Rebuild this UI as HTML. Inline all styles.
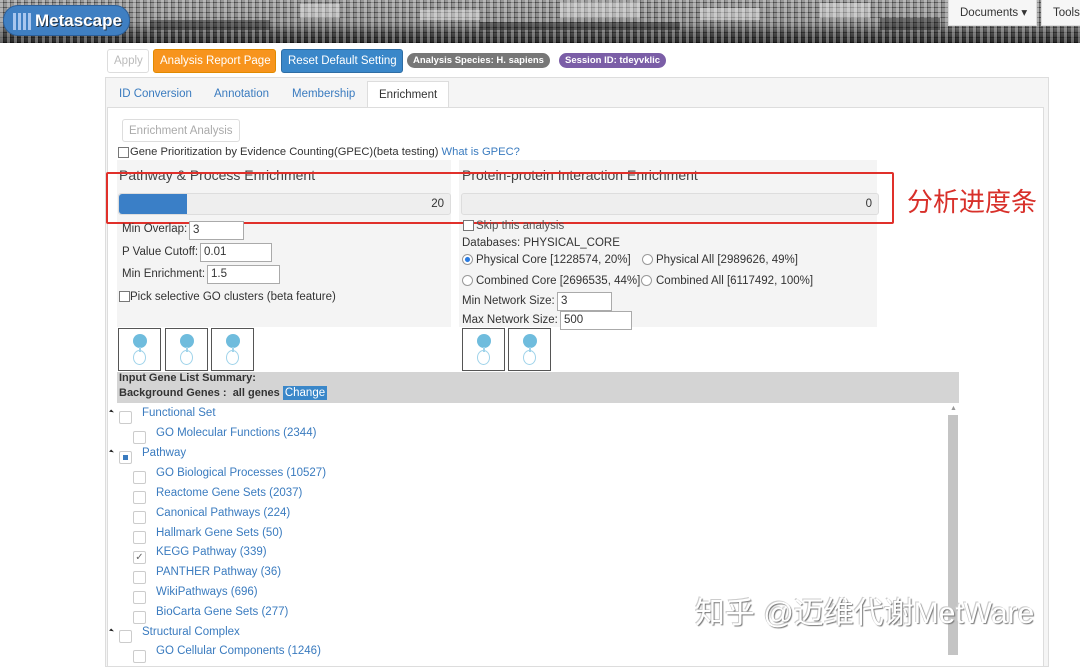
<!DOCTYPE html>
<html><head><meta charset="utf-8"><style>
*{box-sizing:border-box;margin:0;padding:0}
body{width:1080px;height:655px;overflow:hidden;background:#fff;font-family:"Liberation Sans",Arial,sans-serif;font-size:11.5px;color:#333;position:relative}
.hdr{position:absolute;left:0;top:0;width:1080px;height:43px;background:
repeating-linear-gradient(90deg,rgba(255,255,255,.3) 0 3px,rgba(0,0,0,.25) 3px 4px,transparent 4px 7px),
repeating-linear-gradient(0deg,rgba(0,0,0,.4) 0 1px,transparent 1px 5px),
linear-gradient(180deg,#999 0,#888 50%,#444 80%,#222 100%);}
.hdr .blk{position:absolute;background:rgba(255,255,255,.35)}
.hdr .dk{position:absolute;background:rgba(0,0,0,.35)}
.logo{position:absolute;left:3px;top:5px;width:127px;height:31px;background:#3f7fc2;border-radius:15px;border:1px solid #2c5f99;color:#fff;font-weight:bold;font-size:17px;line-height:29px;padding-left:31px;text-shadow:1px 1px 0 #234}
.logo i{position:absolute;left:9px;top:7px;width:18px;height:17px;background:linear-gradient(90deg,#a8c6ee 0 3px,transparent 3px 5px,#a8c6ee 5px 8px,transparent 8px 10px,#a8c6ee 10px 13px,transparent 13px 15px,#a8c6ee 15px)}
.nav{position:absolute;top:0;height:26px;background:#f6f6f6;border:1px solid #ddd;border-top:none;font-size:11.5px;color:#333;line-height:26px;padding:0 11px;white-space:nowrap}
.btn{position:absolute;top:49px;height:24px;line-height:22px;font-size:11.5px;padding:0 6px;border-radius:3px;border:1px solid;white-space:nowrap}
.badge{position:absolute;top:53px;height:15px;line-height:15px;font-size:9.5px;font-weight:bold;color:#fff;padding:0 6px;border-radius:8px;white-space:nowrap}
.panel{position:absolute;left:105px;top:77px;width:944px;height:590px;border:1px solid #ddd;background:#f5f5f5}
.inner{position:absolute;left:107px;top:107px;width:937px;height:560px;background:#fff;border:1px solid #ddd}
.tab{position:absolute;top:81px;font-size:11.5px;color:#3a7bbf;line-height:26px}
.gray{position:absolute;background:#f4f4f4}
.t{position:absolute;white-space:nowrap}
.inp{position:absolute;height:19px;border:1px solid #aaa;background:#fff;font-size:11.5px;line-height:17px;padding-left:3px}
.bar{position:absolute;height:22px;background:#eee;border:1px solid #ddd;border-radius:3px}
.cb{position:absolute;width:11px;height:11px;border:1px solid #777;background:#fff}
.rad{position:absolute;width:11px;height:11px;border:1px solid #999;border-radius:50%;background:#fff}
.ic{position:absolute;top:328px;width:43px;height:43px;border:1px solid #555;background:#fff}
.ic b{position:absolute;left:14px;top:5px;width:14px;height:14px;border-radius:50%;background:#6fbcdd}
.ic u{position:absolute;left:14px;top:21px;width:13px;height:15px;border:1px solid #9fd3ea;border-radius:50%}
.ic s{position:absolute;left:20px;top:18px;width:2px;height:5px;background:#9fd3ea}
.tree{position:absolute;font-size:11.5px;color:#3a7bbf}
.tb{position:absolute;width:13px;height:13px;border:1px solid #ccc;border-radius:2px;background:#fff}
.ar{position:absolute;width:0;height:0;border-left:3px solid transparent;border-top:4px solid #222;transform:rotate(-45deg)}
</style></head><body>
<div class="hdr">
<div class="blk" style="left:300px;top:4px;width:40px;height:14px"></div>
<div class="blk" style="left:420px;top:10px;width:60px;height:10px"></div>
<div class="blk" style="left:560px;top:2px;width:80px;height:16px"></div>
<div class="blk" style="left:700px;top:8px;width:60px;height:12px"></div>
<div class="blk" style="left:820px;top:3px;width:50px;height:15px"></div>
<div class="dk" style="left:150px;top:20px;width:120px;height:10px"></div>
<div class="dk" style="left:480px;top:22px;width:200px;height:8px"></div>
<div class="dk" style="left:880px;top:18px;width:60px;height:12px"></div>
<div class="logo"><i></i>Metascape</div>
<div class="nav" style="left:948px;width:89px">Documents ▾</div>
<div class="nav" style="left:1041px;width:50px">Tools</div>
</div>
<div class="btn" style="left:107px;width:42px;border-color:#ddd;color:#bbb;background:#fff">Apply</div>
<div class="btn" style="left:153px;width:123px;border-color:#e08a00;background:#f7941d;color:#fff">Analysis Report Page</div>
<div class="btn" style="left:281px;width:122px;border-color:#2e6da4;background:#3a87c9;color:#fff">Reset Default Setting</div>
<div class="badge" style="left:407px;background:#777">Analysis Species: H. sapiens</div>
<div class="badge" style="left:559px;background:#7b5ea7">Session ID: tdeyvklic</div>
<div class="panel"></div>
<div class="tab" style="left:119px">ID Conversion</div>
<div class="tab" style="left:214px">Annotation</div>
<div class="tab" style="left:292px">Membership</div>
<div style="position:absolute;left:367px;top:81px;width:82px;height:27px;background:#fff;border:1px solid #ddd;border-bottom:none;line-height:26px;padding-left:11px;font-size:11.5px;color:#333">Enrichment</div>
<div class="inner"></div>
<div class="btn" style="left:122px;top:119px;height:23px;border-color:#ddd;color:#aaa;background:#fff">Enrichment Analysis</div>
<div class="cb" style="left:118px;top:147px"></div>
<div class="t" style="left:130px;top:146px;font-size:11.2px">Gene Prioritization by Evidence Counting(GPEC)(beta testing) <span style="color:#3a7bbf">What is GPEC?</span></div>
<div class="gray" style="left:117px;top:160px;width:334px;height:167px"></div>
<div class="gray" style="left:459px;top:160px;width:418px;height:167px"></div>
<div class="t" style="left:119px;top:167px;font-size:14px;color:#444">Pathway &amp; Process Enrichment</div>
<div class="t" style="left:462px;top:167px;font-size:14px;color:#444">Protein-protein Interaction Enrichment</div>
<div class="bar" style="left:118px;top:193px;width:333px"><div style="position:absolute;left:0;top:0;width:68px;height:20px;background:#3a7fc7;border-radius:3px 0 0 3px"></div><span style="position:absolute;right:6px;top:4px">20</span></div>
<div class="bar" style="left:461px;top:193px;width:418px"><span style="position:absolute;right:6px;top:4px">0</span></div>
<div style="position:absolute;left:106px;top:172px;width:788px;height:52px;border:2px solid #e0302a;border-radius:2px"></div>
<div class="t" style="left:907px;top:182px;font-size:26px;color:#d8302a;font-family:'Noto Sans CJK SC',sans-serif">分析进度条</div>
<div class="t" style="left:122px;top:223px">Min Overlap:</div><div class="inp" style="left:189px;top:221px;width:55px">3</div>
<div class="t" style="left:122px;top:246px">P Value Cutoff:</div><div class="inp" style="left:200px;top:243px;width:72px">0.01</div>
<div class="t" style="left:122px;top:268px">Min Enrichment:</div><div class="inp" style="left:207px;top:265px;width:73px">1.5</div>
<div class="cb" style="left:119px;top:291px"></div><div class="t" style="left:130px;top:291px">Pick selective GO clusters (beta feature)</div>
<div class="cb" style="left:463px;top:220px"></div><div class="t" style="left:476px;top:220px;color:#555">Skip this analysis</div>
<div class="t" style="left:462px;top:237px">Databases: PHYSICAL_CORE</div>
<div class="rad" style="left:462px;top:254px;background:radial-gradient(#2a7be0 35%,#fff 45%)"></div><div class="t" style="left:476px;top:254px">Physical Core [1228574, 20%]</div>
<div class="rad" style="left:642px;top:254px"></div><div class="t" style="left:656px;top:254px">Physical All [2989626, 49%]</div>
<div class="rad" style="left:462px;top:275px"></div><div class="t" style="left:476px;top:275px">Combined Core [2696535, 44%]</div>
<div class="rad" style="left:641px;top:275px"></div><div class="t" style="left:656px;top:275px">Combined All [6117492, 100%]</div>
<div class="t" style="left:462px;top:295px">Min Network Size:</div><div class="inp" style="left:557px;top:292px;width:55px">3</div>
<div class="t" style="left:462px;top:314px">Max Network Size:</div><div class="inp" style="left:560px;top:311px;width:72px">500</div>
<div class="ic" style="left:118px"><b></b><s></s><u></u></div>
<div class="ic" style="left:165px"><b></b><s></s><u></u></div>
<div class="ic" style="left:211px"><b></b><s></s><u></u></div>
<div class="ic" style="left:462px"><b></b><s></s><u></u></div>
<div class="ic" style="left:508px"><b></b><s></s><u></u></div>
<div class="gray" style="left:117px;top:372px;width:842px;height:31px;background:#d4d4d4"></div>
<div class="t" style="left:119px;top:372px;font-weight:bold;font-size:11px">Input Gene List Summary:</div>
<div class="t" style="left:119px;top:387px;font-weight:bold;font-size:11px">Background Genes :&nbsp; all genes <span style="background:#3a87c9;color:#fff;font-weight:normal;padding:1px 2px;font-size:11.5px">Change</span></div>
<div style="position:absolute;left:948px;top:415px;width:10px;height:240px;background:#c4c4c4"></div>
<div style="position:absolute;left:950px;top:405px;color:#999;font-size:7px">▲</div>
<div class="ar" style="left:110px;top:410px"></div><div class="tb" style="left:119px;top:411px"></div><div class="tree t" style="left:142px;top:407px">Functional Set</div>
<div class="tb" style="left:133px;top:431px"></div><div class="tree t" style="left:156px;top:427px">GO Molecular Functions (2344)</div>
<div class="ar" style="left:110px;top:450px"></div><div class="tb" style="left:119px;top:451px"><div style="position:absolute;left:3px;top:3px;width:5px;height:5px;background:#3a7bbf"></div></div><div class="tree t" style="left:142px;top:447px">Pathway</div>
<div class="tb" style="left:133px;top:471px"></div><div class="tree t" style="left:156px;top:467px">GO Biological Processes (10527)</div>
<div class="tb" style="left:133px;top:491px"></div><div class="tree t" style="left:156px;top:487px">Reactome Gene Sets (2037)</div>
<div class="tb" style="left:133px;top:511px"></div><div class="tree t" style="left:156px;top:507px">Canonical Pathways (224)</div>
<div class="tb" style="left:133px;top:531px"></div><div class="tree t" style="left:156px;top:527px">Hallmark Gene Sets (50)</div>
<div class="tb" style="left:133px;top:551px;font-size:10px;line-height:12px;color:#666;text-align:center">✓</div><div class="tree t" style="left:156px;top:546px">KEGG Pathway (339)</div>
<div class="tb" style="left:133px;top:571px"></div><div class="tree t" style="left:156px;top:566px">PANTHER Pathway (36)</div>
<div class="tb" style="left:133px;top:591px"></div><div class="tree t" style="left:156px;top:586px">WikiPathways (696)</div>
<div class="tb" style="left:133px;top:611px"></div><div class="tree t" style="left:156px;top:606px">BioCarta Gene Sets (277)</div>
<div class="ar" style="left:110px;top:629px"></div><div class="tb" style="left:119px;top:630px"></div><div class="tree t" style="left:142px;top:626px">Structural Complex</div>
<div class="tb" style="left:133px;top:650px"></div><div class="tree t" style="left:156px;top:645px">GO Cellular Components (1246)</div>
<div class="t" style="left:695px;top:588px;font-size:30px;color:#fff;text-shadow:1px 1px 1px #777,-1px -1px 0 #ccc;font-family:'Liberation Sans','Noto Sans CJK SC',sans-serif">知乎 @迈维代谢MetWare</div>
</body></html>
